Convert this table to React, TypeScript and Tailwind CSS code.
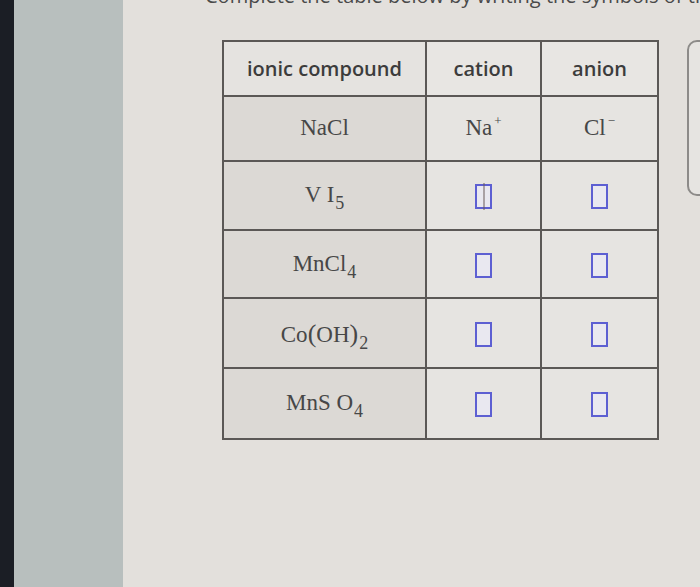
import React from 'react';

const serif = { fontFamily: '"Liberation Serif", "Times New Roman", serif' };

function AnswerBox({ cursor = false }: { cursor?: boolean }) {
  return (
    <span className="relative inline-block w-[17px] h-[25px] border-2 border-[#5d5fd2] bg-[#e9e8f0] align-middle">
      {cursor && (
        <span className="absolute left-1/2 -top-[3px] -bottom-[3px] w-[1px] -translate-x-1/2 bg-[#6b5a5a]" />
      )}
    </span>
  );
}

type Row = { key: string; formula: React.ReactNode; cation: React.ReactNode; anion: React.ReactNode; h: string };

const Sub = ({ children }: { children: React.ReactNode }) => (
  <sub className="text-[18px] relative top-[7px] ml-[1px]">{children}</sub>
);

const Sup = ({ children }: { children: React.ReactNode }) => (
  <sup className="text-[13px] relative -top-[10px] ml-[2px]">{children}</sup>
);

const rows: Row[] = [
  {
    key: 'nacl',
    h: 'h-[65px]',
    formula: <span>NaCl</span>,
    cation: (
      <span>
        Na<Sup>+</Sup>
      </span>
    ),
    anion: (
      <span>
        Cl<Sup>−</Sup>
      </span>
    ),
  },
  {
    key: 'vi5',
    h: 'h-[69px]',
    formula: (
      <span>
        V I<Sub>5</Sub>
      </span>
    ),
    cation: <AnswerBox cursor />,
    anion: <AnswerBox />,
  },
  {
    key: 'mncl4',
    h: 'h-[68px]',
    formula: (
      <span>
        MnCl<Sub>4</Sub>
      </span>
    ),
    cation: <AnswerBox />,
    anion: <AnswerBox />,
  },
  {
    key: 'cooh2',
    h: 'h-[70px]',
    formula: (
      <span>
        Co<span className="text-[26px]">(</span>OH<span className="text-[26px]">)</span>
        <Sub>2</Sub>
      </span>
    ),
    cation: <AnswerBox />,
    anion: <AnswerBox />,
  },
  {
    key: 'mnso4',
    h: 'h-[71px]',
    formula: (
      <span>
        MnS O<Sub>4</Sub>
      </span>
    ),
    cation: <AnswerBox />,
    anion: <AnswerBox />,
  },
];

export default function App() {
  return (
    <div className="w-[700px] h-[587px] flex overflow-hidden bg-[#e3e0dc]" style={{ fontFamily: '"Open Sans", "Noto Sans", sans-serif' }}>
      <div className="w-[14px] shrink-0 bg-[#1b1e25]" />
      <div className="w-[109px] shrink-0 bg-[#b8bfbe]" />
      <div className="flex-1 flex flex-col overflow-hidden">
        <div className="-mt-[18px] ml-[82px] text-[20px] leading-[28px] text-[#4a4a4a] whitespace-nowrap">
          Complete the table below by writing the symbols of the cation and anion
        </div>
        <div className="flex items-start mt-[30px] ml-[99px]">
          <table className="border-collapse border-2 border-[#5b5856] text-[#3c3c3c] shrink-0">
            <thead>
              <tr className="h-[55px]">
                <th className="w-[203px] border-2 border-[#5b5856] bg-[#e5e3e0] text-[20px] font-semibold">ionic compound</th>
                <th className="w-[115px] border-2 border-[#5b5856] bg-[#e8e6e3] text-[20px] font-semibold">cation</th>
                <th className="w-[117px] border-2 border-[#5b5856] bg-[#e8e6e3] text-[20px] font-semibold">anion</th>
              </tr>
            </thead>
            <tbody className="text-[23px] text-[#474747]" style={serif}>
              {rows.map((r) => (
                <tr key={r.key} className={r.h}>
                  <td className="border-2 border-[#5b5856] bg-[#dcd9d5] text-center">{r.formula}</td>
                  <td className="border-2 border-[#5b5856] bg-[#e6e4e1] text-center">{r.cation}</td>
                  <td className="border-2 border-[#5b5856] bg-[#e6e4e1] text-center">{r.anion}</td>
                </tr>
              ))}
            </tbody>
          </table>
          <div className="ml-[28px] shrink-0 w-[60px] h-[156px] rounded-[10px] border-2 border-[#8d8b89] bg-[#e6e4e1]" />
        </div>
      </div>
    </div>
  );
}
